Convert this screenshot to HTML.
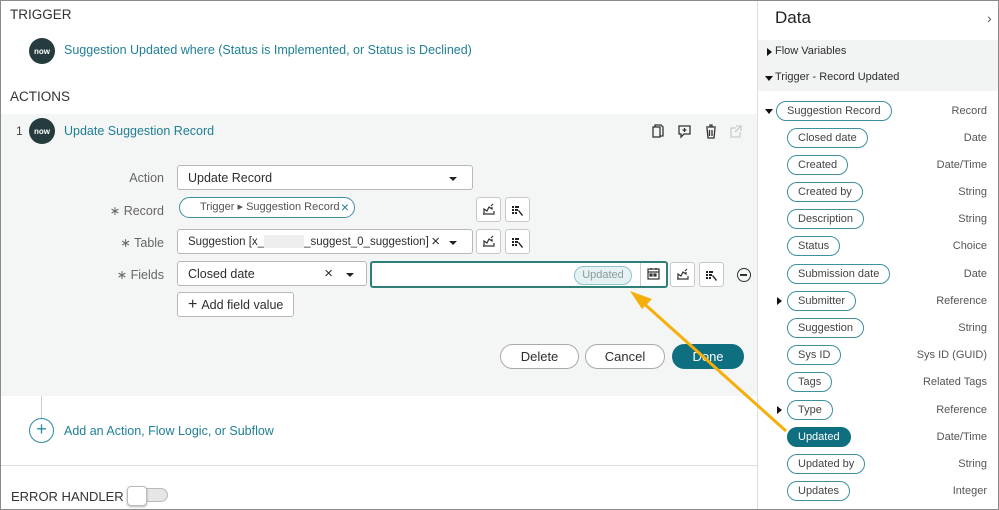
<!DOCTYPE html>
<html><head><style>
*{box-sizing:border-box;margin:0;padding:0}
body{width:999px;height:510px;overflow:hidden;background:#fff;font-family:"Liberation Sans",sans-serif;color:#2e2e2e;position:relative}
.a{position:absolute;white-space:nowrap}
.frame{position:absolute;left:0;top:0;width:999px;height:510px;border:1px solid #8a8a8a;pointer-events:none}
.h{font-size:13.5px;color:#333}
.link{color:#1f7f95;font-size:12.5px}
.now{width:26px;height:26px;border-radius:50%;background:#263b3d;color:#fff;font-size:8px;font-weight:bold;display:flex;align-items:center;justify-content:center}
.lbl{font-size:12.5px;color:#666;text-align:right;width:100px}
.box{background:#fff;border:1px solid #b8b8b8;border-radius:3px;font-size:12.5px;padding-left:10px;display:flex;align-items:center;white-space:nowrap}
.sq{width:25px;height:25px;background:#fff;border:1px solid #c8c8c8;border-radius:3px;display:flex;align-items:center;justify-content:center}
.caret{width:0;height:0;border-left:4px solid transparent;border-right:4px solid transparent;border-top:4px solid #222}
.btn{border:1px solid #aaa;border-radius:13px;background:#fff;font-size:13px;display:flex;align-items:center;justify-content:center;height:25px}
.pill{position:absolute;height:20px;border:1.5px solid #3f8fa0;border-radius:10px;font-size:11px;color:#444;padding:0 10px;display:flex;align-items:center;background:#fff;white-space:nowrap}
.type{position:absolute;right:12px;font-size:11px;color:#555}
.tri{position:absolute;width:0;height:0;border-top:4px solid transparent;border-bottom:4px solid transparent;border-left:5px solid #111}
.trd{position:absolute;width:0;height:0;border-left:4px solid transparent;border-right:4px solid transparent;border-top:5px solid #111}
</style></head><body>
<svg width="0" height="0" style="position:absolute"><defs>
<g id="i1" fill="none" stroke="#333" stroke-width="1.2"><path d="M3 11V6l3 2 2-4 3 2V4M2 11h11V8M10 3l2-2"/></g>
<g id="i2" fill="#222"><rect x="2" y="3" width="2" height="2"/><rect x="5" y="3" width="4" height="2"/><rect x="2" y="6" width="2" height="2"/><rect x="5" y="6" width="3" height="2"/><rect x="2" y="9" width="2" height="2"/><rect x="5" y="9" width="2" height="2"/><path d="M9 7l4 5-1 1-4-5z"/></g>
</defs></svg>
<div class="a h" style="left:10px;top:7px">TRIGGER</div>
<div class="a now" style="left:29px;top:38px">now</div>
<div class="a link" style="left:64px;top:43px">Suggestion Updated where (Status is Implemented, or Status is Declined)</div>
<div class="a h" style="left:10px;top:89px">ACTIONS</div>
<div class="a" style="left:0;top:114px;width:757px;height:282px;background:#f4f5f5"></div>
<div class="a" style="left:16px;top:124px;font-size:12px;color:#444">1</div>
<div class="a now" style="left:29px;top:118px">now</div>
<div class="a link" style="left:64px;top:124px">Update Suggestion Record</div>
<svg class="a" style="left:650px;top:124px" width="100" height="16" fill="none" stroke="#333" stroke-width="1.3">
<rect x="3" y="3" width="7" height="10"/><path d="M5 3V1h6l2 2v9h-3"/>
<path d="M29 2h11v8h-6l-3 3v-3h-2z"/><path d="M34.5 4v4M32.5 6h4"/>
<path d="M56 3h10M60 3V1h2v2M57 4l1 10h6l1-10"/><path d="M59.5 6v6M62 6v6"/>
<path d="M86 4h-5v9h9v-5M86 2h5v5M91 2l-6 6" stroke="#ccc"/>
</svg>
<div class="a lbl" style="left:64px;top:171px">Action</div>
<div class="a box" style="left:177px;top:165px;width:296px;height:25px">Update Record<div class="caret" style="position:absolute;right:15px;top:11px"></div></div>
<div class="a lbl" style="left:64px;top:203px">∗ Record</div>
<div class="a" style="left:179px;top:197px;width:176px;height:21px;border:1.5px solid #3f8fa0;border-radius:11px;background:#fff;font-size:11px;color:#555;padding-left:20px;line-height:18px">Trigger ▸ Suggestion Record<span style="position:absolute;right:5px;top:0;font-size:14px;color:#1f7f95">×</span></div>
<div class="a sq" style="left:476px;top:197px"><svg width="15" height="14"><use href="#i1"/></svg></div><div class="a sq" style="left:505px;top:197px"><svg width="15" height="14"><use href="#i2"/></svg></div>
<div class="a lbl" style="left:64px;top:235px">∗ Table</div>
<div class="a box" style="left:177px;top:229px;width:296px;height:25px;font-size:11.5px">Suggestion [x_<span style="display:inline-block;width:40px;height:13px;background:#eee"></span>_suggest_0_suggestion]<span style="position:absolute;right:32px;font-size:15px">×</span><div class="caret" style="position:absolute;right:15px;top:11px"></div></div>
<div class="a sq" style="left:476px;top:229px"><svg width="15" height="14"><use href="#i1"/></svg></div><div class="a sq" style="left:505px;top:229px"><svg width="15" height="14"><use href="#i2"/></svg></div>
<div class="a lbl" style="left:64px;top:267px">∗ Fields</div>
<div class="a box" style="left:177px;top:261px;width:190px;height:25px">Closed date<span style="position:absolute;right:33px;font-size:15px">×</span><div class="caret" style="position:absolute;right:12px;top:11px"></div></div>
<div class="a" style="left:370px;top:261px;width:298px;height:27px;border:2px solid #2f7f78;border-radius:3px;background:#fff"></div>
<div class="a" style="left:640px;top:263px;width:1px;height:23px;background:#ccc"></div>
<div class="a" style="left:574px;top:266px;width:58px;height:19px;border:1.5px solid #8fc3cc;border-radius:10px;background:#e6f1f3;font-size:11px;color:#8a9a9d;text-align:center;line-height:16px">Updated</div>
<svg class="a" style="left:647px;top:267px" width="13" height="13" fill="none" stroke="#333" stroke-width="1.2"><rect x="1" y="2" width="11" height="10"/><path d="M1 5h11M4 1v2M9 1v2"/><rect x="3" y="7" width="2" height="2" fill="#333"/><rect x="7" y="7" width="2" height="2" fill="#333"/></svg>
<div class="a sq" style="left:670px;top:262px"><svg width="15" height="14"><use href="#i1"/></svg></div><div class="a sq" style="left:699px;top:262px"><svg width="15" height="14"><use href="#i2"/></svg></div>
<div class="a" style="left:737px;top:268px;width:14px;height:14px;border:1.5px solid #333;border-radius:50%"><div style="position:absolute;left:2px;top:5px;width:7px;height:1.5px;background:#333"></div></div>
<div class="a box" style="left:177px;top:292px;width:117px;height:25px"><span style="font-size:16px;margin-right:4px">+</span>Add field value</div>
<div class="a btn" style="left:500px;top:344px;width:79px">Delete</div>
<div class="a btn" style="left:585px;top:344px;width:80px">Cancel</div>
<div class="a btn" style="left:672px;top:344px;width:72px;background:#0e6f80;border-color:#0e6f80;color:#fff">Done</div>
<div class="a" style="left:41px;top:396px;width:1px;height:22px;background:#ccc"></div>
<div class="a" style="left:29px;top:418px;width:25px;height:25px;border:1.5px solid #2b8a9c;border-radius:50%;color:#2b8a9c;font-size:18px;text-align:center;line-height:21px">+</div>
<div class="a link" style="left:64px;top:424px">Add an Action, Flow Logic, or Subflow</div>
<div class="a" style="left:0;top:465px;width:757px;height:1px;background:#ddd"></div>
<div class="a h" style="left:11px;top:489px;font-size:13px">ERROR HANDLER</div>
<div class="a" style="left:128px;top:488px;width:40px;height:14px;border-radius:7px;background:#e6e6e6;border:1px solid #bbb"></div>
<div class="a" style="left:127px;top:486px;width:20px;height:20px;border-radius:4px;background:#fff;border:1px solid #bbb;box-shadow:0 1px 2px rgba(0,0,0,.3)"></div>

<div class="a" style="left:757px;top:0;width:1px;height:510px;background:#ddd"></div>
<div class="a" style="left:775px;top:8px;font-size:17px;color:#222">Data</div>
<div class="a" style="left:987px;top:10px;font-size:14px;color:#555">›</div>
<div class="a" style="left:758px;top:40px;width:240px;height:51px;background:#f2f3f3"></div>
<div class="tri" style="left:767px;top:48px"></div><div class="a" style="left:775px;top:45px;font-size:11px">Flow Variables</div>
<div class="trd" style="left:765px;top:76px"></div><div class="a" style="left:775px;top:71px;font-size:11px">Trigger - Record Updated</div>
<div class="trd" style="left:765px;top:109px"></div>
<div class="pill" style="left:776px;top:101px">Suggestion Record</div><div class="type" style="top:105px">Record</div>
<div class="pill" style="left:787px;top:128px">Closed date</div><div class="type" style="top:132px">Date</div>
<div class="pill" style="left:787px;top:155px">Created</div><div class="type" style="top:159px">Date/Time</div>
<div class="pill" style="left:787px;top:182px">Created by</div><div class="type" style="top:186px">String</div>
<div class="pill" style="left:787px;top:209px">Description</div><div class="type" style="top:213px">String</div>
<div class="pill" style="left:787px;top:236px">Status</div><div class="type" style="top:240px">Choice</div>
<div class="pill" style="left:787px;top:264px">Submission date</div><div class="type" style="top:268px">Date</div>
<div class="tri" style="left:777px;top:297px"></div>
<div class="pill" style="left:787px;top:291px">Submitter</div><div class="type" style="top:295px">Reference</div>
<div class="pill" style="left:787px;top:318px">Suggestion</div><div class="type" style="top:322px">String</div>
<div class="pill" style="left:787px;top:345px">Sys ID</div><div class="type" style="top:349px">Sys ID (GUID)</div>
<div class="pill" style="left:787px;top:372px">Tags</div><div class="type" style="top:376px">Related Tags</div>
<div class="tri" style="left:777px;top:406px"></div>
<div class="pill" style="left:787px;top:400px">Type</div><div class="type" style="top:404px">Reference</div>
<div class="pill" style="left:787px;top:427px;background:#0e6f80;border-color:#0e6f80;color:#fff">Updated</div><div class="type" style="top:431px">Date/Time</div>
<div class="pill" style="left:787px;top:454px">Updated by</div><div class="type" style="top:458px">String</div>
<div class="pill" style="left:787px;top:481px">Updates</div><div class="type" style="top:485px">Integer</div>

<svg class="a" style="left:0;top:0" width="999" height="510">
<line x1="786" y1="431" x2="640" y2="300" stroke="#f5ae0a" stroke-width="3"/>
<polygon points="630,291 652,299 642,309" fill="#f5ae0a"/>
</svg>
<div class="frame"></div>
</body></html>
